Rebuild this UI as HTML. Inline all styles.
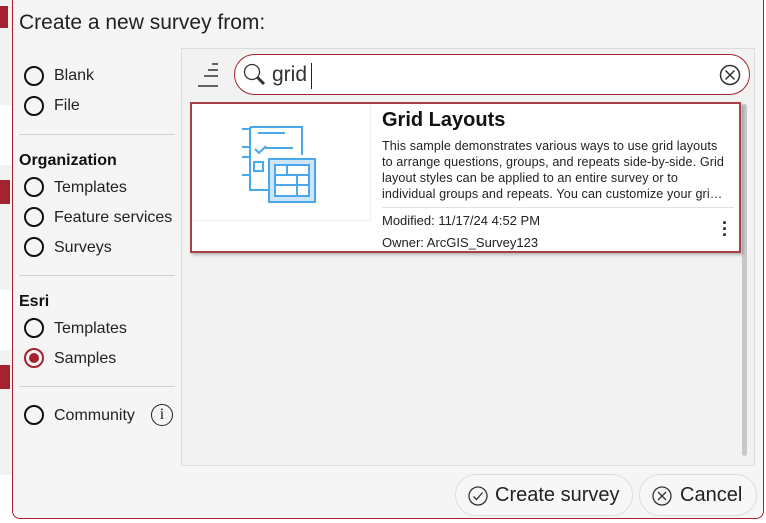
<!DOCTYPE html>
<html><head><meta charset="utf-8"><style>
*{box-sizing:border-box;margin:0;padding:0}
body{width:766px;height:523px;overflow:hidden;background:#fff;font-family:"Liberation Sans",sans-serif;position:relative}
.abs{position:absolute}
.dlg{left:12px;top:-4px;width:752px;height:523px;background:#f5f5f5;border:1px solid #b0202c;border-radius:0 0 8px 8px}
.t{position:absolute;color:#222;white-space:nowrap}
.rad{position:absolute;width:20px;height:20px;border:2px solid #111;border-radius:50%}
.hr{position:absolute;left:19px;width:156px;height:1px;background:#d0d0d0}
.btn{position:absolute;height:42px;border:1px solid #ddd;border-radius:21px;background:#f7f7f7;font-size:20px;color:#222}
</style></head><body>
<div class="abs" style="left:0;top:0;width:12px;height:523px;background:#f2f2f2"></div>
<div class="abs" style="left:0;top:6px;width:8px;height:22px;background:#a3242f"></div>
<div class="abs" style="left:0;top:105px;width:12px;height:60px;background:#fff"></div>
<div class="abs" style="left:0;top:180px;width:10px;height:24px;background:#a3242f"></div>
<div class="abs" style="left:0;top:290px;width:12px;height:60px;background:#fff"></div>
<div class="abs" style="left:0;top:365px;width:10px;height:24px;background:#a3242f"></div>
<div class="abs" style="left:0;top:475px;width:766px;height:48px;background:#fff"></div>
<div class="abs dlg"></div>
<div class="t" style="left:19px;top:11px;font-size:21px;color:#222">Create a new survey from:</div>

<div class="rad" style="left:24px;top:66px"></div><div class="t" style="left:54px;top:67px;font-size:16px">Blank</div>
<div class="rad" style="left:24px;top:96px"></div><div class="t" style="left:54px;top:97px;font-size:16px">File</div>
<div class="hr" style="top:134px"></div>
<div class="t" style="left:19px;top:152px;font-size:16px;font-weight:bold;color:#111">Organization</div>
<div class="rad" style="left:24px;top:177px"></div><div class="t" style="left:54px;top:179px;font-size:16px">Templates</div>
<div class="rad" style="left:24px;top:207px"></div><div class="t" style="left:54px;top:209px;font-size:16px">Feature services</div>
<div class="rad" style="left:24px;top:237px"></div><div class="t" style="left:54px;top:239px;font-size:16px">Surveys</div>
<div class="hr" style="top:275px"></div>
<div class="t" style="left:19px;top:293px;font-size:16px;font-weight:bold;color:#111">Esri</div>
<div class="rad" style="left:24px;top:318px"></div><div class="t" style="left:54px;top:320px;font-size:16px">Templates</div>
<div class="rad" style="left:24px;top:348px;border-color:#a3242f"><div style="position:absolute;left:3px;top:3px;width:10px;height:10px;border-radius:50%;background:#a3242f"></div></div><div class="t" style="left:54px;top:350px;font-size:16px">Samples</div>
<div class="hr" style="top:386px"></div>
<div class="rad" style="left:24px;top:405px"></div><div class="t" style="left:54px;top:407px;font-size:16px">Community</div>
<div class="abs" style="left:151px;top:404px;width:22px;height:22px;border:1.5px solid #222;border-radius:50%;font-family:'Liberation Serif',serif;font-size:16px;text-align:center;line-height:19px;color:#222">i</div>

<div class="abs" style="left:181px;top:48px;width:574px;height:418px;background:#f2f2f2;border:1px solid #dcdcdc"></div>
<svg class="abs" style="left:196px;top:62px" width="26" height="26"><g stroke="#333" stroke-width="1.5"><line x1="16" y1="2" x2="22" y2="2"/><line x1="12" y1="8" x2="22" y2="8"/><line x1="8" y1="14" x2="22" y2="14"/><line x1="2" y1="24" x2="22" y2="24"/></g></svg>
<div class="abs" style="left:234px;top:54px;width:516px;height:41px;background:#fff;border:1.5px solid #a3242f;border-radius:21px"></div>
<svg class="abs" style="left:243px;top:63px" width="26" height="26"><circle cx="9" cy="9" r="7.5" fill="none" stroke="#333" stroke-width="1.3"/><line x1="14.5" y1="14.5" x2="21" y2="21" stroke="#333" stroke-width="3"/></svg>
<div class="t" style="left:272px;top:63px;font-size:21px;color:#333">grid</div>
<div class="abs" style="left:311px;top:63px;width:1px;height:26px;background:#222"></div>
<svg class="abs" style="left:719px;top:64px" width="22" height="22"><circle cx="11" cy="11" r="9.5" fill="none" stroke="#333" stroke-width="1.5"/><path d="M6.5 6.5L15.5 15.5M15.5 6.5L6.5 15.5" stroke="#333" stroke-width="1.5"/></svg>

<div class="abs" style="left:742px;top:104px;width:5px;height:352px;background:#c8c8c8;border-radius:3px"></div>
<div class="abs" style="left:190px;top:102px;width:551px;height:151px;background:#fff;border:2px solid #a8404a;box-shadow:2px 2px 3px rgba(0,0,0,.25)"></div>
<div class="abs" style="left:192px;top:104px;width:179px;height:117px;border-right:1px solid #eee;border-bottom:1px solid #eee"></div>
<svg class="abs" style="left:240px;top:120px" width="80" height="85"><g fill="none" stroke="#4aa8ec" stroke-width="2">
<path d="M10 7H62V35M10 7V70H28"/><line x1="18" y1="13" x2="45" y2="13"/><line x1="25" y1="28" x2="53" y2="28"/>
<path d="M15 29l4 4l7-7"/><rect x="14" y="42" width="9" height="9"/>
<line x1="2" y1="9" x2="10" y2="9"/><line x1="2" y1="27" x2="10" y2="27"/><line x1="2" y1="37" x2="10" y2="37"/><line x1="2" y1="55" x2="10" y2="55"/>
<rect x="29" y="39" width="46" height="43" fill="#cfe6fa"/><rect x="35" y="45" width="34" height="31" fill="#fff"/>
<line x1="35" y1="55" x2="69" y2="55"/><line x1="35" y1="65" x2="69" y2="65"/><line x1="47" y1="45" x2="47" y2="55"/><line x1="57" y1="55" x2="57" y2="76"/></g></svg>
<div class="t" style="left:382px;top:109px;font-size:20px;font-weight:bold;color:#111">Grid Layouts</div>
<div class="t" style="left:382px;top:138px;font-size:12.6px;line-height:16px;color:#222;letter-spacing:0.1px">This sample demonstrates various ways to use grid layouts<br>to arrange questions, groups, and repeats side-by-side. Grid<br>layout styles can be applied to an entire survey or to<br>individual groups and repeats. You can customize your gri…</div>
<div class="abs" style="left:382px;top:207px;width:352px;height:1px;background:#e3e3e3"></div>
<div class="t" style="left:382px;top:213px;font-size:13px;color:#222">Modified: 11/17/24 4:52 PM</div>
<div class="t" style="left:382px;top:235px;font-size:13px;color:#222">Owner: ArcGIS_Survey123</div>
<div class="t" style="left:722px;top:220px;font-size:18px;font-weight:bold;color:#222;line-height:6px">·<br>·<br>·</div>

<div class="btn" style="left:455px;top:474px;width:178px"><svg class="abs" style="left:12px;top:11px" width="20" height="20"><circle cx="10" cy="10" r="9" fill="none" stroke="#333" stroke-width="1.3"/><path d="M5.5 10.5l3 3l6-7" fill="none" stroke="#333" stroke-width="1.3"/></svg><span class="t" style="left:39px;top:9px">Create survey</span></div>
<div class="btn" style="left:639px;top:474px;width:118px"><svg class="abs" style="left:12px;top:11px" width="20" height="20"><circle cx="10" cy="10" r="9" fill="none" stroke="#333" stroke-width="1.3"/><path d="M6 6l8 8M14 6l-8 8" stroke="#333" stroke-width="1.3"/></svg><span class="t" style="left:40px;top:9px">Cancel</span></div>
</body></html>
